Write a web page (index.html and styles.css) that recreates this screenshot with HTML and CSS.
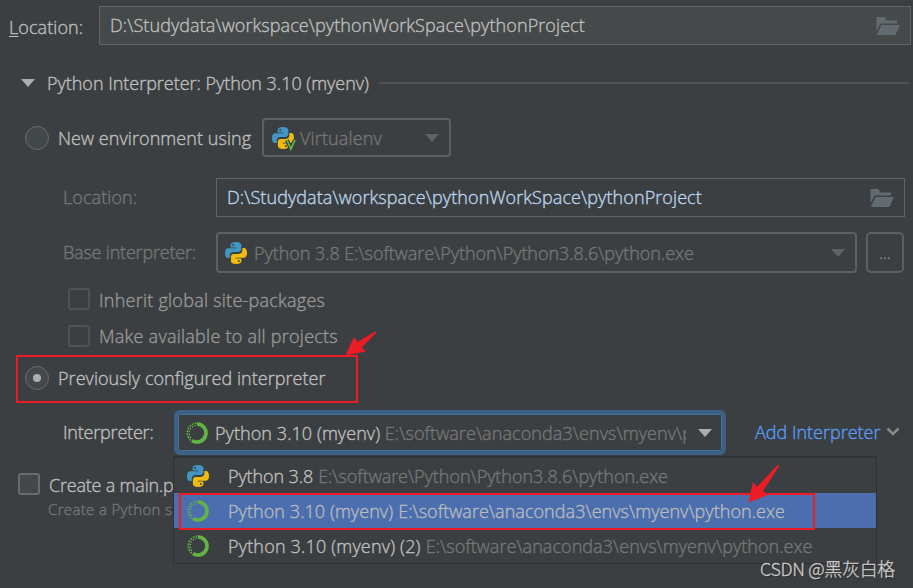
FILE: index.html
```
<!DOCTYPE html>
<html lang="en">
<head>
<meta charset="utf-8">
<title>New Project</title>
<link rel="stylesheet" href="styles.css">
</head>
<body>
<svg class="defs" aria-hidden="true">
  <symbol id="python" viewBox="0 0 22 22">
    <path fill="#4196c4" d="M10.9 0C7.6 0 5.6.9 5.6 3v2.4h5.7v.9H3.2C1.100 6.300 0 8.100 0 11c0 3 1.100 5 3 5h1.800v-2.400c0-2.200 1.600-3.600 3.600-3.600h5c1.700 0 2.900-1.300 2.900-2.900V3c0-2-2-3-5.400-3z"/>
    <path fill="#f0bd0e" d="M11.100 22c3.300 0 5.300-.9 5.300-3v-2.400h-5.700v-.9h8.100c2.100 0 3.200-1.800 3.200-4.700 0-3-1.100-5-3-5h-1.600v2.300c0 2.200-1.600 3.600-3.600 3.600h-5c-1.700 0-2.900 1.300-2.900 2.900V19c0 2 2 3 5.200 3z"/>
    <circle cx="8.200" cy="2.900" r="1" fill="#2f4450"/>
    <circle cx="13.800" cy="19.100" r="1" fill="#4b4320"/>
  </symbol>
  <symbol id="conda" viewBox="0 0 22 22">
    <path d="M11 2A9 9 0 1 1 6 18.500" fill="none" stroke="#62b543" stroke-width="3.600"/>
    <path d="M10.500 1.100A9.900 9.900 0 0 0 5 18.700" fill="none" stroke="#62b543" stroke-width="1.500" stroke-dasharray="1.800 1.200"/>
    <path d="M9.800 3.400A7.800 7.800 0 0 0 5.500 16.600" fill="none" stroke="#62b543" stroke-width="1.300" stroke-dasharray="1.400 1.500"/>
  </symbol>
  <symbol id="folder" viewBox="0 0 24 18">
    <path fill="#616b70" d="M.5 0h8l1.800 3.500h10.700V6.500H4.500L.5 14.500z"/>
    <path fill="#616b70" d="M5.400 8H24l-4.600 10H.9z"/>
  </symbol>
  <symbol id="arrow" viewBox="0 0 14 8"><path fill="currentColor" d="M0 0h14L7 8z"/></symbol>
</svg>

<main class="dialog">
  <div class="row project">
    <label class="label s-loc"><u>L</u>ocation:</label>
    <div class="field filled"><span class="s-path">D:\Studydata\workspace\pythonWorkSpace\pythonProject</span><svg class="folder"><use href="#folder"/></svg></div>
  </div>

  <div class="row section">
    <svg class="arrow open"><use href="#arrow"/></svg>
    <span class="title">Python Interpreter: Python 3.10 (myenv)</span>
    <i class="rule"></i>
  </div>

  <div class="row newenv">
    <i class="radio"></i>
    <span class="radio-text s-new">New environment using</span>
    <div class="combo tool">
      <span class="venv"><svg class="icon"><use href="#python"/></svg><svg class="vee" viewBox="0 0 10 12"><path class="halo" d="M1 1l3.900 9L9 1"/><path d="M1 1l3.900 9L9 1"/></svg></span>
      <span class="s-virt">Virtualenv</span>
      <svg class="arrow"><use href="#arrow"/></svg>
    </div>
  </div>

  <div class="row envloc">
    <label class="label dim s-loc">Location:</label>
    <div class="field"><span class="s-path">D:\Studydata\workspace\pythonWorkSpace\pythonProject</span><svg class="folder"><use href="#folder"/></svg></div>
  </div>

  <div class="row base">
    <label class="label dim s-base">Base interpreter:</label>
    <div class="combo wide">
      <svg class="icon"><use href="#python"/></svg>
      <span class="s-py38">Python 3.8 E:\software\Python\Python3.8.6\python.exe</span>
      <svg class="arrow"><use href="#arrow"/></svg>
    </div>
    <button class="more">...</button>
  </div>

  <div class="row option inherit"><i class="check"></i><span class="s-inh">Inherit global site-packages</span></div>
  <div class="row option avail"><i class="check"></i><span class="s-make">Make available to all projects</span></div>

  <div class="row previous">
    <i class="radio on"></i>
    <span class="radio-text s-prev">Previously configured interpreter</span>
  </div>

  <div class="row interp">
    <label class="label s-int">Interpreter:</label>
    <div class="combo focus">
      <svg class="icon"><use href="#conda"/></svg>
      <span class="value"><span class="name">Python 3.10 (myenv)</span> <span class="path">E:\software\anaconda3\envs\myenv\p</span></span>
      <svg class="arrow"><use href="#arrow"/></svg>
    </div>
    <a class="link">Add Interpreter</a>
    <svg class="chevron" viewBox="0 0 14 9"><path d="M1.500 1.500L7 7l5.500-5.500"/></svg>
  </div>

  <div class="row mainpy"><i class="check"></i><span class="s-main">Create a main.p</span></div>
  <p class="hint">Create a Python s</p>

  <ul class="popup">
    <li><svg class="icon"><use href="#python"/></svg><span class="name s-p38">Python 3.8</span><span class="path s-e38">E:\software\Python\Python3.8.6\python.exe</span></li>
    <li class="selected"><svg class="icon"><use href="#conda"/></svg><span class="name">Python 3.10 (myenv)</span><span class="path">E:\software\anaconda3\envs\myenv\python.exe</span></li>
    <li><svg class="icon"><use href="#conda"/></svg><span class="name s-two">Python 3.10 (myenv) (2)</span><span class="path">E:\software\anaconda3\envs\myenv\python.exe</span></li>
  </ul>

  <div class="mark mark-radio"></div>
  <div class="mark mark-item"></div>
  <svg class="pointer pointer-radio" viewBox="0 0 32 25"><path d="M.5 24.500L9 6l3.500 5L30 .5l1.500 1L16.500 16.500l4.500 4z"/></svg>
  <svg class="pointer pointer-item" viewBox="0 0 32 39"><path d="M.5 38.500L5 18l4 5L29.500 1l2 .5L15 27l4.500 4z"/></svg>
  <div class="watermark">CSDN @黑灰白格</div>
</main>
</body>
</html>
```
FILE: styles.css
```
* { box-sizing: border-box; }
body {
  margin: 0;
  background: #3c3f41;
  color: #bfbfbf;
  font: 300 18px/24px "Open Sans", "Noto Sans", sans-serif;
  -webkit-text-stroke: .35px;
}
.defs { position: absolute; width: 0; height: 0; }
.dialog { position: relative; width: 913px; height: 588px; overflow: hidden; padding-top: 6px; }
.row { display: flex; align-items: center; white-space: nowrap; }
svg { display: block; flex: none; }
.label { flex: none; }
u { text-underline-offset: 2px; text-decoration-thickness: 1px; }
.dim { color: #777777; }

.field {
  display: flex; align-items: center; justify-content: space-between;
  height: 39px; border: 1.500px solid #646464; padding: 0 10px;
}
.field span { padding-bottom: 2px; }
.filled { background: #45494a; }
.folder { width: 24px; height: 18px; }
.icon { width: 22px; height: 22px; }
.arrow { width: 14px; height: 8px; color: #616161; }

.project { height: 39px; padding-left: 9px; }
.project .label { width: 90px; padding-top: 2px; }
.project .field { width: 812px; }

.section { height: 24px; margin-top: 26px; padding-left: 21px; }
.section .open { color: #adadad; }
.title { width: 322px; margin: 0 10px 0 12px; padding-bottom: 1px; letter-spacing: -.02px; }
.rule { width: 530px; height: 2px; background: #515355; }

.radio {
  flex: none; width: 24px; height: 24px; margin-left: 25px;
  border: 1.500px solid #6b6b6b; border-radius: 50%; background: #43494a;
}
.on { display: grid; place-items: center; }
.on::after { content: ""; width: 8px; height: 8px; border-radius: 50%; background: #adadad; }
.radio-text { margin-left: 9px; }

.combo {
  display: flex; align-items: center;
  border: 2px solid #5e6060; border-radius: 4px; color: #777777;
}
.combo .arrow { margin-left: auto; }

.newenv { height: 39px; margin-top: 23px; }
.newenv .radio-text { width: 204px; }
.tool { width: 189px; height: 39px; padding: 0 10px 0 8px; }
.venv { position: relative; margin-right: 6px; }
.vee { position: absolute; left: 14px; top: 12px; width: 10px; height: 12px; overflow: visible; }
.vee path { fill: none; stroke: #62b543; stroke-width: 1.800; }
.vee .halo { stroke: #3c3f41; stroke-width: 4; }

.envloc { height: 39px; margin-top: 21px; padding-left: 63px; }
.envloc .label { width: 153px; padding-bottom: 1px; }
.envloc .field { width: 689px; color: #bbd5ec; }

.base { height: 41px; margin-top: 15px; padding-left: 63px; }
.base .label { width: 153px; padding-bottom: 1px; }
.wide { width: 641px; height: 41px; padding: 0 10px 0 7px; }
.wide .icon { margin-right: 7px; }
.more {
  width: 38px; height: 41px; margin-left: 9px; padding: 0;
  border: 2px solid #5e6060; border-radius: 5px; background: none;
  color: #8a8a8a; font: inherit; font-size: 16px;
}

.check { flex: none; width: 22px; height: 22px; border: 2px solid #505254; border-radius: 3px; }
.option { height: 22px; padding-left: 68px; gap: 9px; color: #999999; }
.option.inherit span { padding-top: 1px; }
.inherit { margin-top: 15px; }
.avail { margin-top: 15px; }

.previous { height: 24px; margin-top: 19px; }

.interp { height: 45px; margin-top: 20px; padding-left: 63px; }
.interp .label { width: 111px; padding-bottom: 1px; }
.focus {
  width: 552px; height: 45px; padding: 0 10px 0 8px;
  border: 4px solid #3d6185; border-radius: 6px; color: #bfbfbf;
  box-shadow: inset 0 0 0 1px #466d94;
}
.focus .arrow { color: #adadad; }
.value { width: 471px; margin-left: 7px; overflow: hidden; }
.name { letter-spacing: .07px; }
.path { letter-spacing: .05px; color: #777777; }
.value .path { letter-spacing: .08px; }
.link { width: 126px; margin-left: 29px; padding-bottom: 1px; color: #589df6; letter-spacing: 0; }
.chevron { width: 14px; height: 9px; margin: 0 0 3px 5px; }
.chevron path { fill: none; stroke: #7f8b91; stroke-width: 2.500; }

.mainpy { height: 22px; margin-top: 18px; padding-left: 18px; gap: 9px; }
.mainpy span { padding-top: 1px; }
.mainpy .check { border-color: #6b6b6b; background: #43494a; }
.hint { margin: 2px 0 0 48px; font-size: 15px; letter-spacing: .35px; color: #777777; }

.popup {
  position: absolute; left: 173px; top: 456px; width: 704px; margin: 0; padding: 0;
  list-style: none; background: #3c3f41; border: 1px solid #323232; border-top-width: 2px;
}
.popup li { display: flex; align-items: center; height: 35px; padding-left: 13px; white-space: nowrap; }
.popup .name { margin: 0 5px 0 19px; }
.selected .name, .selected .path { color: #bbbbbb; }
.selected { background: #4b6eaf; }

.mark { position: absolute; border: 2px solid #ed1c24; }
.mark-radio { left: 16px; top: 355px; width: 342px; height: 48px; }
.mark-item { left: 179px; top: 493px; width: 636px; height: 37px; }
.pointer { position: absolute; fill: #ed1c24; }
.pointer-radio { left: 345px; top: 331px; width: 32px; height: 25px; }
.pointer-item { left: 748px; top: 464px; width: 32px; height: 39px; }
.watermark {
  position: absolute; left: 760px; top: 557px; color: #c8c8c8; letter-spacing: -.35px;
  font: 300 18px/22px "Noto Sans CJK SC", sans-serif; white-space: nowrap;
  text-shadow: 1px 1px 1px #222222;
}

.s-loc { letter-spacing: .08px; }
.s-path { letter-spacing: .09px; }
.s-new { letter-spacing: .07px; }
.s-virt { letter-spacing: .15px; }
.s-base { letter-spacing: -.2px; }
.s-py38 { letter-spacing: -.04px; }
.s-inh { letter-spacing: .25px; }
.s-make { letter-spacing: .25px; }
.s-prev { letter-spacing: .05px; }
.s-int { letter-spacing: -.2px; }
.popup .s-p38 { letter-spacing: -.1px; }
.popup .s-e38 { letter-spacing: -.03px; }
.s-main { letter-spacing: -.2px; }
.popup .s-two { letter-spacing: .18px; }
```
